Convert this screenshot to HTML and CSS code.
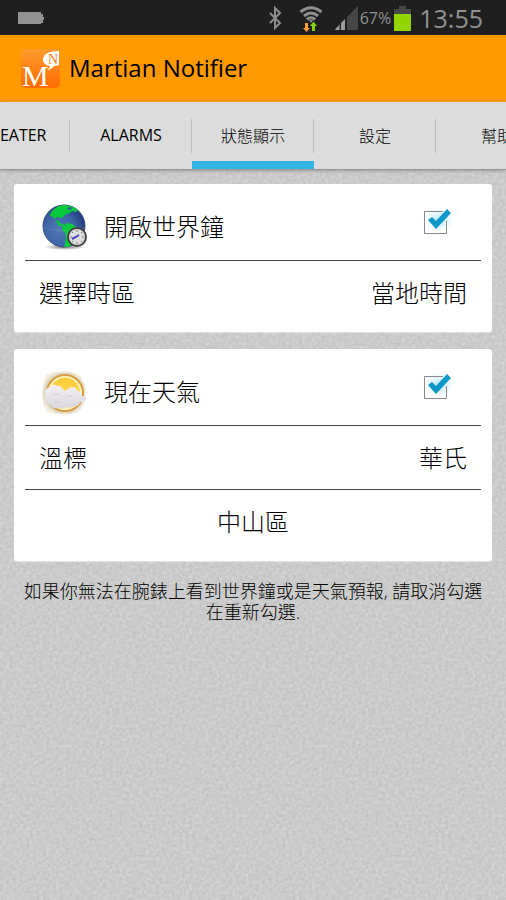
FILE: index.html
```html
<!DOCTYPE html>
<html lang="zh-Hant">
<head>
	<meta charset="UTF-8">
	<meta name="viewport" content="width=device-width, initial-scale=1">
	<title>Martian Notifier</title>
	<link rel="stylesheet" href="styles.css">
</head>
<body>
	<!-- status bar -->
	<div class="status">
		<svg class="status-left" width="28" height="16" viewBox="0 0 28 16"><path d="M1 2h23v2h2v3h1v3h-1v3h-2v1H1z" fill="#929292"/></svg>
		<svg width="14" height="24" viewBox="0 0 14 24"><path d="M2 7l10 10-5 5V2l5 5L2 17" fill="none" stroke="#8c8c8c" stroke-width="2"/></svg>
		<svg class="wifi" width="26" height="28" viewBox="0 0 26 28">
			<g fill="none" stroke="#8e8e8e" stroke-width="3">
				<path d="M2.500 8q10.500-8.500 21 0"/>
				<path d="M6 12q7-6 14 0"/>
				<path d="M9 15.500q4-3.500 8 0"/>
			</g>
			<path d="M11 16h4l-2 3z" fill="#8e8e8e"/>
			<path d="M7 19h3v5h2l-3.500 4L5 24h2z" fill="#ff9c2e"/>
			<path d="M14 27v-5h-2l3.500-4.500L19 22h-2v5z" fill="#86d100"/>
		</svg>
		<svg width="24" height="24" viewBox="0 0 24 24">
			<path d="M13 11L24 0v24H13z" fill="#464646"/>
			<path d="M1 23.500L6 18v6H1zM7 17l4-4v11H7z" fill="#9b9b9b"/>
			<path d="M6 18v6M11.500 12v12" stroke="#1f1f1f"/>
		</svg>
		<span class="percent">67%</span>
		<svg class="battery" width="17" height="26" viewBox="0 0 17 26">
			<path d="M5 1h7v3h5v6H0V4h5z" fill="#464646"/>
			<path d="M0 9h17v17H0z" fill="#93d500"/>
		</svg>
		<span class="clock">13:55</span>
	</div>

	<!-- title bar -->
	<header class="title-bar">
		<svg width="40" height="40" viewBox="0 0 40 40">
			<defs>
				<linearGradient id="logo" x2="0" y2="1">
					<stop offset="0" stop-color="#ff9b2c"/>
					<stop offset="1" stop-color="#ff6c00"/>
				</linearGradient>
			</defs>
			<rect x="1" y="0" width="39" height="39" rx="5" fill="url(#logo)"/>
			<path d="M39 2v14q-3 1-5 1-2 3-7 4 3-2 3-4-7-1-7-7 1-8 16-8z" fill="#fff"/>
			<text class="logo-m" x="2" y="37">M</text>
			<text class="logo-n" x="28" y="15">N</text>
		</svg>
		<h1>Martian Notifier</h1>
	</header>

	<!-- tabs -->
	<nav class="tabs">
		<a href="#">REPEATER</a>
		<a href="#">ALARMS</a>
		<a href="#" class="active">狀態顯示</a>
		<a href="#">設定</a>
		<a href="#">幫助</a>
	</nav>

	<main>
		<section class="card">
			<div class="row head">
				<svg width="48" height="48" viewBox="0 0 48 48">
					<defs>
						<radialGradient id="sea" cx=".4" cy=".6" r=".6">
							<stop offset="0" stop-color="#5279b5"/>
							<stop offset=".6" stop-color="#3f65a7"/>
							<stop offset="1" stop-color="#253f83"/>
						</radialGradient>
						<radialGradient id="shade">
							<stop offset="0" stop-color="#777"/>
							<stop offset="1" stop-color="#777" stop-opacity="0"/>
						</radialGradient>
						<clipPath id="globe"><circle cx="24" cy="24" r="21"/></clipPath>
					</defs>
					<ellipse cx="25" cy="45" rx="21" ry="3" fill="url(#shade)"/>
					<circle cx="24" cy="24" r="21" fill="url(#sea)" stroke="#395178"/>
					<g clip-path="url(#globe)">
						<path d="M9 14q6-11 16-12 9 0 13 6l-2 2-4-1-2 2-5 2-3 3-6-1-1 3 4 1 1 2 6 3-1 2-7-3-3-6-5-4z" fill="#09c93c"/>
						<path d="M23 24l4-3 5 1 4 3 5 2-1 7-7 4-4 9-5-1 2-11-1-4-3-3z" fill="#09c93c"/>
						<path d="M27 6l4-1 1 2-3 1z" fill="#2f5c9d"/>
						<path d="M3 26q22 5 42 0" fill="none" stroke="#7fa0cc" stroke-opacity=".3"/>
					</g>
					<circle cx="37" cy="35" r="9" fill="#dededf" stroke="#444" stroke-width="2"/>
					<g stroke="#777"><path d="M37 28v2M37 40v2M30 35h2M42 35h2M32 30l1 1M41 39l1 1M42 30l-1 1M32 40l1-1"/></g>
					<path d="M39 33l-3 2-4 2" fill="none" stroke="#4944c4" stroke-width="2"/>
				</svg>
				<label for="clock">開啟世界鐘</label>
				<input type="checkbox" id="clock" checked>
			</div>
			<div class="row">
				<span>選擇時區</span>
				<span>當地時間</span>
			</div>
		</section>

		<section class="card">
			<div class="row head">
				<svg width="48" height="48" viewBox="0 0 48 48">
					<defs>
						<radialGradient id="glow">
							<stop offset=".7" stop-color="#a99d74"/>
							<stop offset="1" stop-color="#d8cfa8" stop-opacity="0"/>
						</radialGradient>
						<linearGradient id="sun" x2="0" y2="1">
							<stop offset="0" stop-color="#ffc52e"/>
							<stop offset=".6" stop-color="#ffdc55"/>
							<stop offset="1" stop-color="#ffe9a0"/>
						</linearGradient>
						<linearGradient id="cloud" x2="0" y2="1">
							<stop offset="0" stop-color="#f2f0f2"/>
							<stop offset="1" stop-color="#dad7dd"/>
						</linearGradient>
					</defs>
					<circle cx="24" cy="26" r="23" fill="url(#glow)"/>
					<path d="M6 8l7-3 10 1 9-1 9 4 4 9-1 20-6 8-14 1-16-1-5-8V17z" fill="#d9d0ab" opacity=".35"/>
					<circle cx="25" cy="26" r="18" fill="url(#sun)" stroke="#d99a45" stroke-width="2"/>
					<circle cx="25" cy="26" r="16" fill="none" stroke="#fff0b8" stroke-width="2"/>
					<path d="M5 28q-1-7 5-8 3-4 7-1 3-1 5 2l3 3 4-3q6-3 9 3 4 1 4 5 5 0 4 3-2 4-6 3-1 5-6 4-4 3-8 1-4 3-8 1-6 1-7-3-7-2-6-10z" fill="url(#cloud)"/>
					<path d="M12 29q3-4 7-1M25 31q4-5 8 0M14 36q4-3 7 0" fill="none" stroke="#cfcbd2"/>
				</svg>
				<label for="weather">現在天氣</label>
				<input type="checkbox" id="weather" checked>
			</div>
			<div class="row">
				<span>溫標</span>
				<span>華氏</span>
			</div>
			<div class="row center">
				<span>中山區</span>
			</div>
		</section>

		<p class="note">如果你無法在腕錶上看到世界鐘或是天氣預報, 請取消勾選在重新勾選.</p>
	</main>
</body>
</html>
```
FILE: styles.css
```css
* {box-sizing: border-box;}
body {margin: 0; min-height: 100vh; color: #000; font-family: "Open Sans", "Noto Sans CJK TC", sans-serif; font-weight: 300;
	background: #cbcbcb url("data:image/svg+xml,%3Csvg xmlns='http://www.w3.org/2000/svg' width='256' height='256'%3E%3Cfilter id='n' x='0' y='0' width='1' height='1' color-interpolation-filters='sRGB'%3E%3CfeTurbulence type='fractalNoise' baseFrequency='.3' numOctaves='2' stitchTiles='stitch'/%3E%3CfeColorMatrix values='.12 0 0 0 .735 .12 0 0 0 .735 .12 0 0 0 .735 0 0 0 0 1'/%3E%3C/filter%3E%3Crect width='256' height='256' filter='url(%23n)'/%3E%3C/svg%3E");}
svg {display: block; flex: none; overflow: visible;}

/* status bar */
.status {display: flex; align-items: center; height: 35px; padding: 0 23px 0 17px; background: #1f1f1f; color: #929292; font-weight: 400;}
.status-left {margin-right: auto;}
.wifi {margin: 0 10px 0 16px;}
.percent {margin: 0 3px 0 2px; font-size: 16px;}
.battery {margin-right: 8px;}
.clock {font-size: 25px;}

/* title bar */
.title-bar {display: flex; align-items: center; gap: 9px; height: 67px; padding: 0 20px; background: #ff9900;}
.title-bar h1 {margin: 0; padding-bottom: 3px; font-size: 24px; font-weight: 400;}
.logo-m {font: 30px "Liberation Serif", serif; fill: #fff;}
.logo-n {font: 14px "Liberation Serif", serif; fill: #f47a10;}

/* tabs */
.tabs {display: flex; justify-content: center; height: 68px; overflow: hidden; background: #dcdcdc; border-bottom: 1px solid #999; box-shadow: 0 1px 3px #999;}
.tabs a {flex: none; display: flex; align-items: center; justify-content: center; width: 122px; padding-bottom: 2px; color: #000; font-size: 16px; font-weight: 400; text-decoration: none;
	background: linear-gradient(#bdbdbd, #bdbdbd) right center / 1px 34px no-repeat;}
.tabs .active, .tabs .active ~ a {font-weight: 300;}
.tabs .active {border: solid #33b5e5; border-width: 0 0 8px; padding-top: 6px; padding-bottom: 0; background-position: right 17px;}

/* cards */
main {padding: 14px;}
.card {margin-bottom: 17px; padding: 8px 11px; border-radius: 3px; background: #fff; box-shadow: 0 1px 1px #e4e4e4;}
.row {display: flex; align-items: center; justify-content: space-between; height: 64px; padding: 0 14px 3px; border-top: 1px solid #444; font-size: 24px;}
.head {gap: 16px; height: 68px; padding: 0 29px 0 15px; border-top: 0;}
.head label {padding-bottom: 2px;}
.center {justify-content: center;}
.head input {appearance: none; width: 32px; height: 40px; margin: 0 0 0 auto;
	background: url("data:image/svg+xml,%3Csvg xmlns='http://www.w3.org/2000/svg' viewBox='0 0 32 40'%3E%3Cpath d='M4.500 5.500h22v22h-22z' fill='%23fff' stroke='%23888'/%3E%3C/svg%3E") center / 32px 40px no-repeat;}
.head input:checked {background-image: url("data:image/svg+xml,%3Csvg xmlns='http://www.w3.org/2000/svg' viewBox='0 0 32 40'%3E%3Cdefs%3E%3CradialGradient id='g'%3E%3Cstop stop-color='%23a8e4f8'/%3E%3Cstop offset='1' stop-color='%23d8f4fd' stop-opacity='0'/%3E%3C/radialGradient%3E%3C/defs%3E%3Cellipse cx='19' cy='14' rx='15' ry='13' fill='url(%23g)'/%3E%3Cpath d='M23 5.500H4.500v22h22V15' fill='none' stroke='%23888'/%3E%3Cpath d='M8 14l4-3 4 4L27 3l4 4L16 23z' fill='%230d97c9'/%3E%3C/svg%3E");}
.note {margin: 0; padding: 3px 7px; font-size: 18px; line-height: 21px; text-align: center;}
```
